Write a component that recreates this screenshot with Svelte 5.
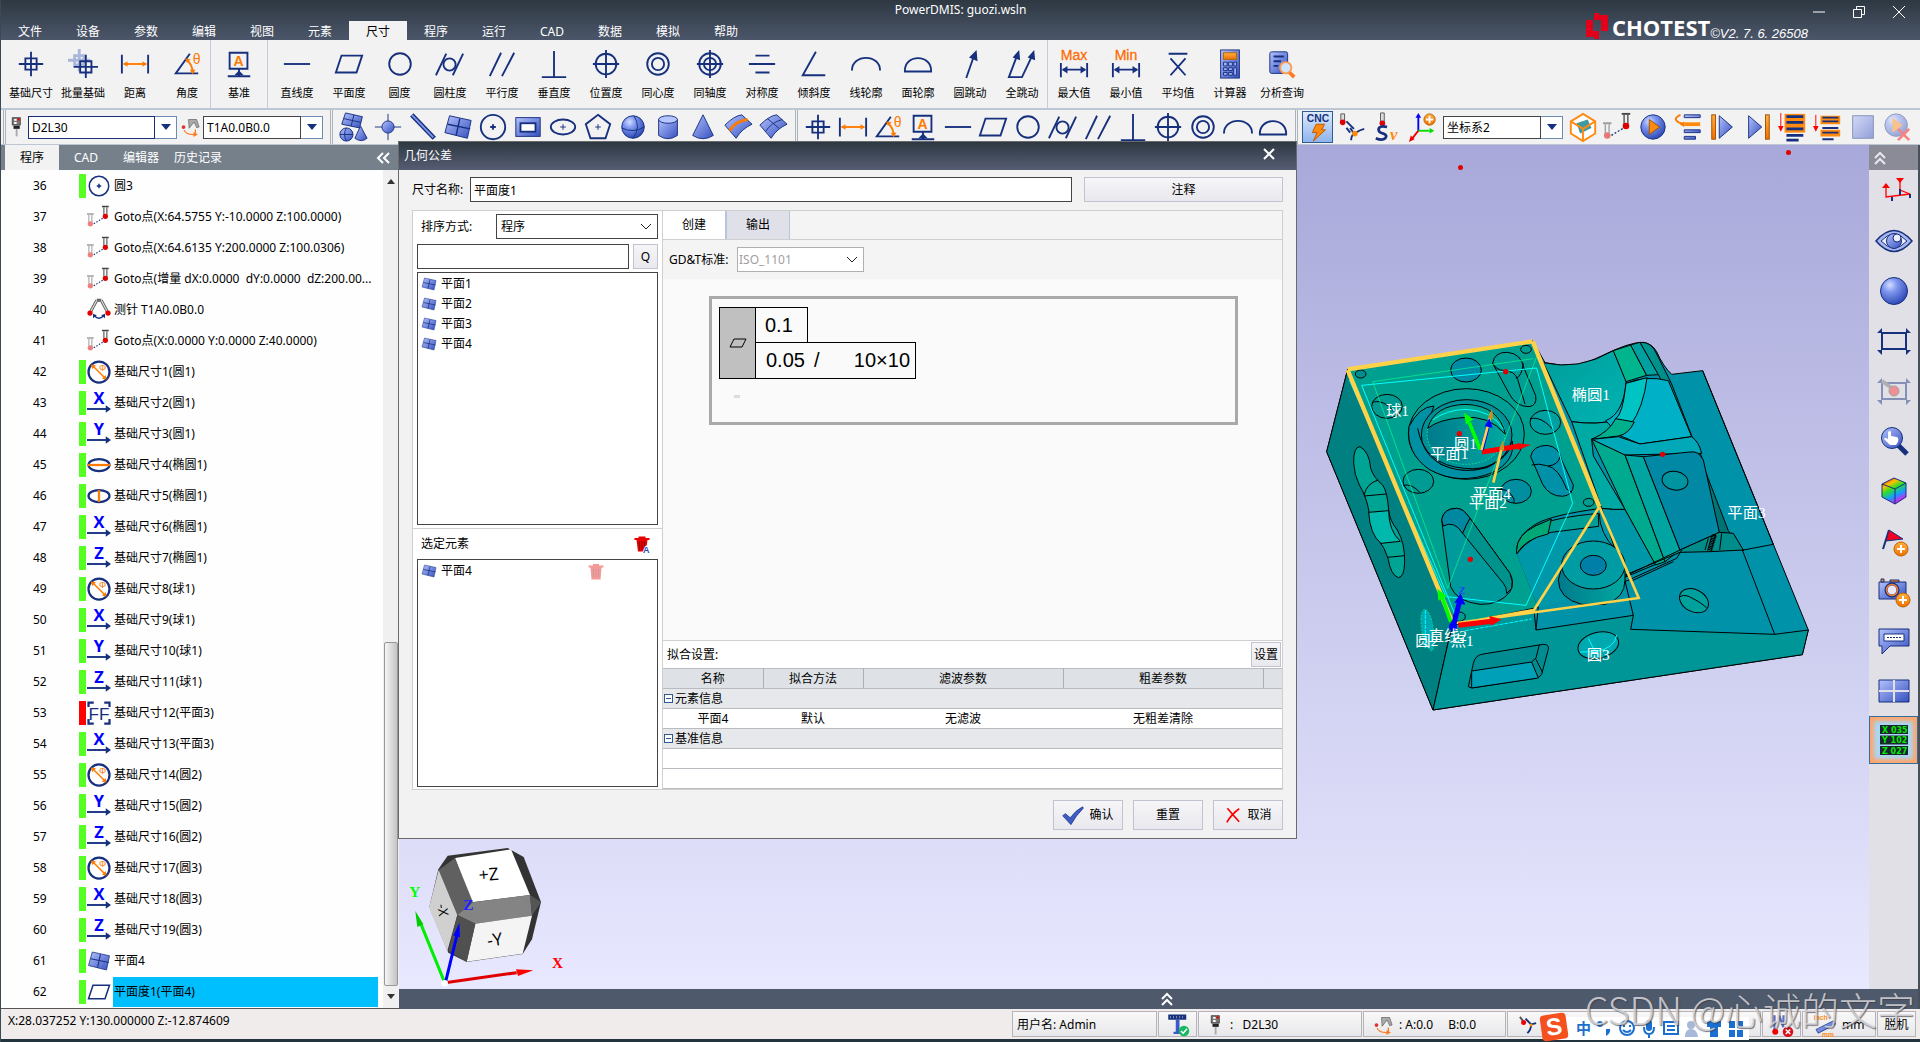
<script>
    const N = 'stroke="#16307e" stroke-width="2" fill="none"';
    const T = 'stroke="#16307e" stroke-width="1" fill="url(#blue)"';
    const O = 'stroke="#ff7a00" stroke-width="2" fill="none"';
    const plus = '<circle cx="23" cy="22" r="7" fill="url(#orange)" stroke="#c06000"/><path d="M23 18v8M19 22h8" stroke="#fff" stroke-width="2"/>';
    const probe = '<path d="M20 2h9" stroke="#444" stroke-width="2"/><path d="M22.500 3v10M26.500 3v10" stroke="#555" stroke-width="1.500"/><circle cx="24.500" cy="15" r="3.500" fill="#e00000"/>';

    // every icon is drawn in a 32 x 32 box
    const icons = {
        basic: `<path d="M16 3v26M3 16h26M10 10h12v12H10z" ${N}/>`,
        batch: `<g opacity=".35"><path d="M12 0v24M0 12h24M7 7h10v10H7z" stroke="#2448b0" stroke-width="3" fill="none"/></g><path d="M19 6v25M6 19h26M13 13h12v12H13z" ${N}/>`,
        distance: `<path d="M2 6v20M30 6v20" ${N}/><path d="M4 16h24" ${O}/><path d="M3 16l5-3v6zM29 16l-5-3v6z" fill="#ff7a00"/>`,
        angle: `<path d="M19 5L4 26h24" ${N}/><path d="M16 12q6 5 6 13" ${O}/><path d="M14 10l6 1-4 4zM19 22h6l-3 5z" fill="#ff7a00"/><text x="22" y="16" font-size="15" font-family="Liberation Sans" fill="#ff7a00">θ</text>`,
        datum: `<path d="M6 4h19v17H6zM16 21v8M4 29h24" ${N}/><path d="M11 28l5-5 5 5z" fill="#16307e"/><text x="15.500" y="18" text-anchor="middle" font-size="15" font-weight="bold" font-family="Liberation Sans" fill="#ff7a00">A</text>`,
        line: `<path d="M2 16h28" ${N}/>`,
        flat: `<path d="M8 7h22l-6 18H2z" ${N}/>`,
        circle: `<circle cx="16" cy="16" r="11.500" ${N}/>`,
        cyl: `<path d="M1 28L12 5M19 28L30 5" ${N}/><circle cx="15.500" cy="16.500" r="6.500" ${N}/>`,
        para: `<path d="M3 29L15 4M16 29L29 4" ${N}/>`,
        perp: `<path d="M16 2v28M3 30h26" ${N}/>`,
        position: `<circle cx="16" cy="16" r="11" ${N}/><path d="M16 1v30M2 16h28" ${N}/>`,
        concentric: `<circle cx="16" cy="16" r="11.500" ${N}/><circle cx="16" cy="16" r="6.500" ${N}/>`,
        coaxial: `<circle cx="16" cy="16" r="11.500" ${N}/><circle cx="16" cy="16" r="6.500" ${N}/><path d="M16 1v30M2 16h28" ${N}/>`,
        symmetry: `<path d="M9 7h15M2 16h28M9 25h15" ${N}/>`,
        slope: `<path d="M18 3L4 28h24" ${N}/>`,
        profile: `<path d="M1 23C1 5 31 5 31 23" ${N}/>`,
        surface: `<path d="M2 24C1 5 31 5 30 24z" ${N}/>`,
        runout: `<path d="M12 31L20 8" ${N}/><path d="M23 1l1 12-9-4z" fill="#16307e"/>`,
        total: `<path d="M10 9L2 30h14L26 9" ${N}/><path d="M13 1l1 11-8-3zM29 1l1 11-8-3z" fill="#16307e"/>`,
        max: `<text x="16" y="12" text-anchor="middle" font-size="15" font-family="Liberation Sans" fill="#ff6a00" stroke="#ff6a00" stroke-width=".3">Max</text><path d="M2 15v15M30 15v15M4 22h24" ${N}/><path d="M3 22l6-4v8zM29 22l-6-4v8z" fill="#16307e"/>`,
        min: `<text x="16" y="12" text-anchor="middle" font-size="15" font-family="Liberation Sans" fill="#ff6a00" stroke="#ff6a00" stroke-width=".3">Min</text><path d="M2 15v15M30 15v15M4 22h24" ${N}/><path d="M3 22l6-4v8zM29 22l-6-4v8z" fill="#16307e"/>`,
        mean: `<path d="M6 5h20M8 10l16 18M24 10L8 28" ${N}/>`,
        calc: `<rect x="6" y="1" width="20" height="30" ${T}/><rect x="9" y="4" width="14" height="7" fill="url(#orange)" stroke="#c06000"/><path d="M9 14h4v4H9zM14.500 14h4v4h-4zM20 14h3v4h-3zM9 20h4v3H9zM14.500 20h4v3h-4zM20 20h3v8h-3zM9 25h4v3H9zM14.500 25h4v3h-4z" fill="#9eb2fa" stroke="#16307e"/>`,
        query: `<rect x="3" y="3" width="19" height="23" rx="2" ${T}/><path d="M7 8h11M7 13h8M7 18h5" ${N}/><path d="M23 24l6 6" stroke="#ff7a20" stroke-width="4"/><circle cx="20" cy="20" r="6" fill="#cfe4ff" stroke="#ff9a50" stroke-width="2"/>`,

        shapes: `<path d="M8 1l18 4-3 12-19-4z" ${T}/><path d="M17 3l-3 12M6 7l18 4" stroke="#16307e"/><circle cx="9" cy="24" r="7" ${T}/><path d="M24 15l7 13q-6 5-13 0z" ${T}/><path d="M9 17q-4 7 0 14M2 24h14" stroke="#16307e" fill="none"/>`,
        point: `<path d="M16 2v28M2 16h28" stroke="#16307e"/><circle cx="16" cy="16" r="6.500" ${T}/>`,
        rod: `<path d="M4 3L28 28" stroke="#16307e" stroke-width="5"/><path d="M4 3L27 27" stroke="#7f95ec" stroke-width="2"/>`,
        plane: `<path d="M7 4l23 5-4 19-24-6z" ${T}/><path d="M18 7l-4 18M5 13l24 5" stroke="#16307e" stroke-width="1.500"/>`,
        dotcircle: `<circle cx="16" cy="16" r="13" ${N}/><path d="M16 13v6M13 16h6" stroke="#16307e" stroke-width="2"/>`,
        slot: `<rect x="3" y="6" width="26" height="20" ${T}/><rect x="8" y="12" width="16" height="9" fill="#fff" stroke="#16307e" stroke-width="2"/>`,
        ellipse: `<ellipse cx="16" cy="16" rx="13" ry="8" ${N}/><path d="M16 13v6M13 16h6" stroke="#16307e"/>`,
        penta: `<path d="M16 3l13 10-5 15H8L3 13z" ${N}/><path d="M16 13v6M13 16h6" stroke="#16307e"/>`,
        ball: `<circle cx="16" cy="16" r="12" fill="url(#ball)" stroke="#16307e"/><path d="M17 4q8 12-1 24M4 17q12 6 24-1" stroke="#16307e" fill="none"/>`,
        cylinder: `<path d="M6 8v17q10 7 20 0V8z" ${T}/><ellipse cx="16" cy="8" rx="10" ry="4" fill="#b8c6ff" stroke="#16307e"/>`,
        cone: `<path d="M16 3L5 25q11 7 22 0z" ${T}/>`,
        curve: `<path d="M2 14Q12 4 20 3l11 10Q20 18 14 28z" ${T}/><path d="M7 20Q13 10 26 8" stroke="#ff7a00" stroke-width="3" fill="none"/>`,
        mesh: `<path d="M2 14Q12 4 20 3l11 10Q20 18 14 28z" ${T}/><path d="M8 21Q14 11 26 8M10 7l12 10" stroke="#16307e" fill="none"/>`,

        cnc: `<text x="16" y="11" text-anchor="middle" font-size="11" font-weight="bold" font-family="Liberation Sans" fill="#16307e">CNC</text><path d="M14 13h9l-3 6h4L11 31l4-9h-5z" fill="#ff8a10" stroke="#c05800"/>`,
        collide: `<path d="M3 2h4v8H3z" fill="#ddd" stroke="#555"/><circle cx="5" cy="11" r="3" fill="#e00000"/><path d="M9 10l8 8M9 17l4 5M14 30q0-6 5-8 5-3 9-4M17 23l-4-6" ${N}/><circle cx="18" cy="23" r="3" fill="#ff8a10"/>`,
        speed: `<path d="M8 1h4v9H8z" fill="#ddd" stroke="#555"/><circle cx="10" cy="12" r="3" fill="#e00000"/><path d="M15 16q-9-2-9 3 0 3 5 4 5 2 2 5-3 3-10 0" stroke="#16307e" stroke-width="3" fill="none"/><text x="18" y="30" font-size="18" font-style="italic" font-weight="bold" font-family="Liberation Serif" fill="#ff8a10">ν</text>`,
        axes: `<path d="M11 20V5" stroke="#00f" stroke-width="2"/><path d="M11 1l3 5H8z" fill="#00f"/><path d="M11 20h12" stroke="#0d0" stroke-width="2"/><path d="M28 20l-5-3v6z" fill="#0d0"/><path d="M11 20L4 29" stroke="#e00" stroke-width="2"/><path d="M1 32l2-7 4 4z" fill="#e00"/><circle cx="23" cy="8" r="6" fill="url(#orange)" stroke="#c06000"/><path d="M23 4v8M19 8h8" stroke="#fff" stroke-width="2"/>`,
        box: `<path d="M16 2l13 8v13l-13 8-13-8V10z" fill="#fff" stroke="#ff8a10" stroke-width="2"/><path d="M9 12l12-4 4 9-12 6z" fill="#3e9aa0"/><path d="M3 10l13 8 13-8M16 18v13" stroke="#ff8a10" stroke-width="2" fill="none"/>`,
        goto: `${probe}<g opacity=".5"><path d="M0 12h9" stroke="#444" stroke-width="2"/><path d="M2.500 13v10M6.500 13v10" stroke="#555" stroke-width="1.500"/><circle cx="4.500" cy="25" r="3.500" fill="#e00000"/></g><path d="M9 25l13-8" stroke="#16307e" stroke-width="1.500" stroke-dasharray="2 2"/>`,
        play: `<circle cx="16" cy="16" r="13" fill="url(#ball)" stroke="#16307e"/><path d="M12 8l11 8-11 8z" fill="#ff8a10" stroke="#a05000"/>`,
        steps: `<path d="M8 3q-9 4-2 8l6 2" ${O}/><path d="M12 10v6l-5-3z" fill="#ff7a00"/><path d="M12 3h17v3H12zM12 19h17v3H12zM12 26h12v3H12z" ${T}/><rect x="12" y="11" width="17" height="4" fill="#ff8a10"/>`,
        stepout: `<rect x="4" y="3" width="4" height="26" fill="url(#orange)" stroke="#a05000"/><path d="M12 4l14 12-14 12z" ${T}/>`,
        stepend: `<rect x="24" y="3" width="4" height="26" fill="url(#orange)" stroke="#a05000"/><path d="M6 4l14 12L6 28z" ${T}/>`,
        jump: `<path d="M3 1v16" stroke="#f00"/><path d="M0 15h6l-3 6z" fill="#f00"/><path d="M7 2h22v20H7z" fill="#ff8a10"/><path d="M9 5h18M9 11h18M9 18h18M9 25h18M9 30h13" stroke="#16307e" stroke-width="3"/>`,
        jumpsel: `<path d="M3 3v14" stroke="#f00"/><path d="M0 15h6l-3 6z" fill="#f00"/><path d="M8 4h21v9H8zM8 19h21v7H8z" fill="#ff8a10"/><path d="M10 6h17M10 10h17M10 17h17M10 22h17M10 29h12" stroke="#16307e" stroke-width="2"/>`,
        stop: `<rect x="5" y="4" width="22" height="24" fill="url(#blue)" stroke="#16307e" opacity=".5"/>`,
        abort: `<g opacity=".45"><circle cx="14" cy="14" r="12" fill="url(#ball)" stroke="#16307e"/><path d="M10 6l11 8-11 8z" fill="#ff8a10"/><path d="M16 18l12 12M28 18L16 30" stroke="#f00" stroke-width="3"/></g>`,

        stylus: `<path d="M13 3L5 18M13 3h6M19 3l8 15" stroke="#666" stroke-width="4" fill="none"/><path d="M13 3L5 18M19 3l8 15" stroke="#ddd" stroke-width="1.500"/><circle cx="4" cy="20" r="3.500" fill="#e00000"/><circle cx="28" cy="20" r="3.500" fill="#e00000"/><path d="M10 24q6 6 12 0" stroke="#16307e" stroke-width="2" fill="none"/><path d="M8 27v-6l5 2zM24 27v-6l-5 2z" fill="#16307e"/>`,
        diameter: `<circle cx="16" cy="16" r="14" stroke="#16307e" stroke-width="3" fill="none"/><path d="M8 8l17 17" ${O}/><path d="M5 6l7 1-5 5zM26 26l-6-1 5-5z" fill="#ff7a00"/><text x="16" y="15" font-size="12" font-family="Liberation Sans" fill="#ff7a00">Φ</text>`,
        ellH: `<ellipse cx="16" cy="16" rx="14" ry="8" stroke="#16307e" stroke-width="3" fill="none"/><path d="M1 16h30" stroke="#ff7a00" stroke-width="3"/>`,
        ellV: `<ellipse cx="16" cy="16" rx="14" ry="8" stroke="#16307e" stroke-width="3" fill="none"/><path d="M16 8v16" stroke="#ff7a00" stroke-width="3"/>`,
        ff: `<path d="M2 8V2h7M23 2h7v6M2 24v6h7M23 30h7v-6" stroke="#16307e" stroke-width="3" fill="none"/><text x="16" y="25" text-anchor="middle" font-size="23" font-family="Liberation Sans" fill="#16307e">FF</text>`,
        head: `<path d="M10 1h13v12H10z" fill="#777" stroke="#222"/><path d="M13 3h4v3h-4zM13 8h4v3h-4z" fill="#fff"/><path d="M12 14h10v5H12z" fill="#222"/><path d="M17 19v12" stroke="#aaa" stroke-width="3"/><circle cx="20" cy="4" r="2" fill="#e00"/>`,
        wrist: `<path d="M12 4h13l4 12-4 1-4-9-8 10z" fill="#aaa" stroke="#555"/><circle cx="4" cy="16" r="3" fill="#d33"/><path d="M5 21q3 8 18 7M23 20v7" stroke="#ff7a20" stroke-width="2" fill="none"/><path d="M20 24l7 4-7 4z" fill="#ff7a20"/>`,

        touch: `<path d="M8 13v9l24-3-10-4V5" stroke="#f00" stroke-width="1.300" fill="none"/><path d="M4 13h8l-4-5zM18 3h8l-4 5z" fill="#f00"/><path d="M14 22v4M32 19v4M22 14v6" stroke="#16307e" stroke-width="2"/>`,
        eye: `<path d="M-2 16Q16-5 34 16 16 37-2 16z" fill="#a8b6ee" stroke="#16307e" stroke-width="1.500"/><path d="M3 16q13-14 26 0-13 14-26 0z" fill="#e8ecff" stroke="#16307e"/><circle cx="16" cy="16" r="7.500" fill="url(#blue)" stroke="#16307e"/><circle cx="19" cy="13" r="4" fill="#eef" stroke="#16307e"/>`,
        sphere: `<circle cx="16" cy="16" r="13.500" fill="url(#ball)" stroke="#16307e"/>`,
        fit: `<rect x="4" y="8" width="24" height="16" ${N}/><path d="M-1 8h5V3zM33 8h-5V3zM-1 25h5v5zM33 25h-5v5z" fill="#16307e"/>`,
        fitprobe: `<g opacity=".45"><rect x="4" y="8" width="24" height="16" ${N}/><path d="M-1 8h5V3zM33 8h-5V3zM-1 25h5v5zM33 25h-5v5z" fill="#16307e"/><path d="M4 6l11 8" stroke="#777" stroke-width="4"/><circle cx="16" cy="16" r="5" fill="#f33" stroke="#555"/></g>`,
        hand: `<path d="M20 20l9 9" stroke="#16307e" stroke-width="5"/><circle cx="14" cy="13" r="10.500" ${T}/><path d="M10 7q2-2 3 0v4l6 1q2 1 1 5l-2 3h-6l-6-6q1-2 4 0z" fill="#fff"/>`,
        rainbow: `<path d="M16 3l12 5v14l-11 7-13-7V9z" fill="url(#rain)" stroke="#16307e"/><path d="M4 9l13 5 11-6M17 14v15" stroke="#16307e" fill="none"/>`,
        flag: `<path d="M11 5L5 24" ${N}/><path d="M11 5l14 9-17 2z" fill="#f00020" stroke="#16307e"/><g transform="translate(0 2)">${plus}</g>`,
        camera: `<path d="M1 7h27v17H1z" ${T}/><path d="M3 4h3v3H3zM12 5h9v2h-9z" fill="#ff8a10" stroke="#16307e"/><circle cx="14" cy="15" r="6" fill="#e8e8ff" stroke="#16307e" stroke-width="3"/><circle cx="14" cy="15" r="5.500" fill="none" stroke="#f08030" stroke-width="1.500"/><g transform="translate(2 3)">${plus}</g>`,
        chat: `<path d="M1 4h30v17H12l-8 8v-8H1z" ${T}/><path d="M6 9h20v7H6z" fill="#fff" stroke="#16307e"/><path d="M9 12.500h14" stroke="#16307e" stroke-dasharray="2 1"/>`,
        quad: `<path d="M1 5h30v22H1z" ${T}/><path d="M1 16h30M16 5v22" stroke="#e0e0e6" stroke-width="2"/>`,
        dro: `<path d="M2 1h28v9H2zM2 11.500h28v9H2zM2 22h28v9H2z" fill="#1c2630"/><g font-size="8" font-weight="bold" font-family="DejaVu Sans" fill="#0e0"><text x="4" y="8.500">X 035</text><text x="4" y="19">Y 102</text><text x="4" y="29.500">Z 027</text></g>`,

        table: `<path d="M3 2h24v7H3z" fill="#16307e"/><path d="M6 4v3M10 4v3M14 4v3M18 4v3M22 4v3" stroke="#9ab"/><path d="M13 9h5v16h-5zM10 25h9v3h-9z" fill="#3a5ac8"/><circle cx="24" cy="24" r="7" fill="#16b860"/><path d="M20 24l3 3 5-6" stroke="#fff" stroke-width="2" fill="none"/>`,
        pen: `<path d="M3 3l6 8" stroke="#555" stroke-width="3"/><circle cx="9" cy="12" r="4" fill="#e00"/><path d="M12 6l9 9M21 15l8-2M21 15q0 8-6 14" stroke="#16307e" stroke-width="3" fill="none"/><circle cx="21" cy="16" r="2.500" fill="#ff8a10"/>`,
        probes: `<path d="M6 3v20M12 3l6 16M18 3v12" stroke="#5a70c0" stroke-width="3"/><circle cx="7" cy="25" r="4" fill="#e00"/><circle cx="24" cy="25" r="7" fill="#d8101c"/><path d="M21 22l6 6M27 22l-6 6" stroke="#fff" stroke-width="2"/>`,
        unit: `<text x="1" y="9" font-size="9" font-weight="bold" font-family="Liberation Sans" fill="#ff8a10">inch</text><path d="M4 22L28 10l2 5L7 27z" ${T}/><text x="12" y="32" font-size="9" font-weight="bold" font-family="Liberation Sans" fill="#ff8a10">mm</text>`,

        bin: `<path d="M1 5h30v4H1zM10 2h12v4H10zM5 9h22l-2 24H7z" fill="#e60000"/><path d="M11 12v16M16 12v16M21 12v16" stroke="#800000" stroke-width="2"/>`,
        binall: `<path d="M1 4h30v4H1zM9 1h14v4H9zM5 8h22l-3 23H8z" fill="#e60000"/><path d="M11 11v16M16 11v16M21 11v16" stroke="#800000" stroke-width="2"/><text x="18" y="33" font-size="18" font-weight="bold" font-family="Liberation Sans" fill="#2a50b8" stroke="#fff" stroke-width="3" paint-order="stroke">A</text>`,
        check: `<path d="M1 17l4-3 7 6Q20 9 30 4l1 2Q20 17 13 30z" fill="#3e5cc4" stroke="#16307e"/>`,
        cross: `<path d="M6 4q10 12 21 24M27 5Q14 14 5 29" stroke="#f00" stroke-width="3" fill="none"/>`
    };
    for (const a of ['X', 'Y', 'Z']) {
        icons['axis' + a] = `<text x="16" y="17" text-anchor="middle" font-size="22" font-weight="bold" font-family="Open Sans" fill="#0000ff">${a}</text><path d="M0 24h28" stroke="#16307e" stroke-width="2.500"/><path d="M25 19l7 5-7 5z" fill="#16307e"/>`;
    }

    const menus = ['文件', '设备', '参数', '编辑', '视图', '元素', '尺寸', '程序', '运行', 'CAD', '数据', '模拟', '帮助'];

    const ribbon = [
        [['basic', '基础尺寸'], ['batch', '批量基础'], ['distance', '距离'], ['angle', '角度']],
        [['datum', '基准']],
        [['line', '直线度'], ['flat', '平面度'], ['circle', '圆度'], ['cyl', '圆柱度'], ['para', '平行度'], ['perp', '垂直度'],
            ['position', '位置度'], ['concentric', '同心度'], ['coaxial', '同轴度'], ['symmetry', '对称度'], ['slope', '倾斜度'],
            ['profile', '线轮廓'], ['surface', '面轮廓'], ['runout', '圆跳动'], ['total', '全跳动']],
        [['max', '最大值'], ['min', '最小值'], ['mean', '平均值'], ['calc', '计算器'], ['query', '分析查询']]
    ];

    const elementTools = ['shapes', 'point', 'rod', 'plane', 'dotcircle', 'slot', 'ellipse', 'penta', 'ball', 'cylinder', 'cone', 'curve', 'mesh'];
    const sizeTools = ['basic', 'distance', 'angle', 'datum', 'line', 'flat', 'circle', 'cyl', 'para', 'perp', 'position', 'concentric', 'profile', 'surface'];
    const moveTools = ['cnc', 'collide', 'speed', 'axes'];
    const runTools = ['box', 'goto', 'play', 'steps', 'stepout', 'stepend', 'jump', 'jumpsel', 'stop', 'abort'];
    const sideTools = ['touch', 'eye', 'sphere', 'fit', 'fitprobe', 'hand', 'rainbow', 'flag', 'camera', 'chat', 'quad', 'dro'];

    // [line, mark, icon, text]
    const program = [
        [36, 'ok', 'dotcircle', '圆3'],
        [37, '', 'goto', 'Goto点(X:64.5755 Y:-10.0000 Z:100.0000)'],
        [38, '', 'goto', 'Goto点(X:64.6135 Y:200.0000 Z:100.0306)'],
        [39, '', 'goto', 'Goto点(增量 dX:0.0000  dY:0.0000  dZ:200.00...'],
        [40, '', 'stylus', '测针 T1A0.0B0.0'],
        [41, '', 'goto', 'Goto点(X:0.0000 Y:0.0000 Z:40.0000)'],
        [42, 'ok', 'diameter', '基础尺寸1(圆1)'],
        [43, 'ok', 'axisX', '基础尺寸2(圆1)'],
        [44, 'ok', 'axisY', '基础尺寸3(圆1)'],
        [45, 'ok', 'ellH', '基础尺寸4(椭圆1)'],
        [46, 'ok', 'ellV', '基础尺寸5(椭圆1)'],
        [47, 'ok', 'axisX', '基础尺寸6(椭圆1)'],
        [48, 'ok', 'axisZ', '基础尺寸7(椭圆1)'],
        [49, 'ok', 'diameter', '基础尺寸8(球1)'],
        [50, 'ok', 'axisX', '基础尺寸9(球1)'],
        [51, 'ok', 'axisY', '基础尺寸10(球1)'],
        [52, 'ok', 'axisZ', '基础尺寸11(球1)'],
        [53, 'bad', 'ff', '基础尺寸12(平面3)'],
        [54, 'ok', 'axisX', '基础尺寸13(平面3)'],
        [55, 'ok', 'diameter', '基础尺寸14(圆2)'],
        [56, 'ok', 'axisY', '基础尺寸15(圆2)'],
        [57, 'ok', 'axisZ', '基础尺寸16(圆2)'],
        [58, 'ok', 'diameter', '基础尺寸17(圆3)'],
        [59, 'ok', 'axisX', '基础尺寸18(圆3)'],
        [60, 'ok', 'axisZ', '基础尺寸19(圆3)'],
        [61, 'ok', 'plane', '平面4'],
        [62, 'ok', 'flat', '平面度1(平面4)']
    ];

    const planes = ['平面1', '平面2', '平面3', '平面4'];

    let sizeName = $state('平面度1');
    let keyword = $state('');
    let selected = $state(62);
</script>

{#snippet icon(name, size)}
    <svg class="icon" width={size} height={size} viewBox="0 0 32 32" aria-hidden="true">{@html icons[name]}</svg>
{/snippet}

{#snippet tools(list)}
    {#each list as name}
        <button class="tool" class:pressed={name === 'cnc'} aria-label={name}>{@render icon(name, 30)}</button>
    {/each}
{/snippet}

<svg class="defs" width="0" height="0" aria-hidden="true">
    <defs>
        <linearGradient id="blue" x1="0" y1="0" x2="1" y2="1">
            <stop offset="0" stop-color="#b4c2fc" />
            <stop offset="1" stop-color="#3550c0" />
        </linearGradient>
        <linearGradient id="orange" x1="0" y1="0" x2="0" y2="1">
            <stop offset="0" stop-color="#ffb040" />
            <stop offset="1" stop-color="#f07000" />
        </linearGradient>
        <radialGradient id="ball" cx=".35" cy=".28" r=".75">
            <stop offset="0" stop-color="#d4deff" />
            <stop offset=".35" stop-color="#8098f0" />
            <stop offset="1" stop-color="#2c48b4" />
        </radialGradient>
        <linearGradient id="rain" x1="0" y1="0" x2=".5" y2="1">
            <stop offset=".1" stop-color="#f03010" />
            <stop offset=".3" stop-color="#ffc000" />
            <stop offset=".5" stop-color="#30e020" />
            <stop offset=".75" stop-color="#10a0ff" />
            <stop offset="1" stop-color="#e020f0" />
        </linearGradient>
    </defs>
</svg>

<div class="app">
    <header class="titlebar">
        <div class="caption">PowerDMIS: guozi.wsln</div>
        <nav class="menu">
            {#each menus as item}
                <button class:active={item === '尺寸'}>{item}</button>
            {/each}
        </nav>
        <div class="brand">
            <svg width="22" height="26" viewBox="0 0 22 26" aria-hidden="true">
                <path d="M8 0h5v2h9v16h-7V7H8zM0 7h7v11h6v8H8v-2H0z" fill="#e3001b" />
            </svg>
            <strong>CHOTEST</strong>
            <em>©V2. 7. 6. 26508</em>
        </div>
        <div class="winctl">
            <button aria-label="最小化"><svg width="14" height="14"><path d="M1 7h12" stroke="#fff" /></svg></button>
            <button aria-label="还原"><svg width="14" height="14"><path d="M1.500 4.500h8v8h-8zM4.500 4V1.500h8v8H10" fill="none" stroke="#fff" /></svg></button>
            <button aria-label="关闭"><svg width="14" height="14"><path d="M1 1l12 12M13 1L1 13" stroke="#fff" /></svg></button>
        </div>
    </header>

    <div class="ribbon">
        {#each ribbon as group}
            <div class="group">
                {#each group as [name, label]}
                    <button class="big" class:narrow={name === 'circle'}>{@render icon(name, 30)}<span>{label}</span></button>
                {/each}
            </div>
        {/each}
    </div>

    <div class="toolbar">
        <div class="strip first">
            {@render icon('head', 20)}
            <div class="combo navy wide">
                <select aria-label="测头"><option>D2L30</option></select><i></i>
            </div>
            {@render icon('wrist', 20)}
            <div class="combo">
                <select aria-label="测针"><option>T1A0.0B0.0</option></select><i></i>
            </div>
        </div>
        <div class="strip elements">{@render tools(elementTools)}</div>
        <div class="strip sizes">{@render tools(sizeTools)}</div>
        <div class="strip run">
            {@render tools(moveTools)}
            <div class="combo">
                <select aria-label="坐标系"><option>坐标系2</option></select><i></i>
            </div>
            {@render tools(runTools)}
        </div>
    </div>

    <main>
        <aside class="program">
            <div class="tabs">
                <button class="active">程序</button>
                <button>CAD</button>
                <button>编辑器</button>
                <button>历史记录</button>
                <button class="fold" aria-label="折叠">
                    <svg width="14" height="12"><path d="M7 1L2 6l5 5M13 1L8 6l5 5" fill="none" stroke="#fff" stroke-width="2" /></svg>
                </button>
            </div>
            <div class="listing">
                <ul>
                    {#each program as [no, mark, name, text]}
                        <li>
                            <span class="no">{no}</span>
                            <span class="mark {mark}"></span>
                            {@render icon(name, 24)}
                            <button class:selected={selected === no} onclick={() => (selected = no)}>{text}</button>
                        </li>
                    {/each}
                </ul>
                <div class="scroll">
                    <svg width="8" height="5"><path d="M0 5l4-5 4 5z" fill="#333" /></svg>
                    <div class="thumb"></div>
                    <svg width="8" height="5"><path d="M0 0h8L4 5z" fill="#333" /></svg>
                </div>
            </div>
        </aside>

        <section class="work">
            <div class="scene">
                <div class="viewport">
                    <svg class="part" width="520" height="400" viewBox="0 0 1560 1200" role="img" aria-label="CAD">
                        <defs>
                            <linearGradient id="bore" x1="0" y1="0" x2="1" y2="0">
                                <stop offset="0" stop-color="#007a8c" />
                                <stop offset="1" stop-color="#00a8a0" />
                            </linearGradient>
                            <linearGradient id="saddle" x1="0" y1="0" x2="1" y2="1">
                                <stop offset="0" stop-color="#009c98" />
                                <stop offset="1" stop-color="#00b4b4" />
                            </linearGradient>
                            <linearGradient id="cliff" x1="0" y1="0" x2="1" y2="0">
                                <stop offset="0" stop-color="#009a94" />
                                <stop offset="1" stop-color="#00686c" />
                            </linearGradient>
                        </defs>
                        <g stroke="#000" stroke-width="3" stroke-linejoin="round" fill="none">
                            <path d="M113 148L668 62l37 66q95 22 165-18 90-45 130-43 25 3 40 28 20 45 45 68l93-11 212 521 105 257-18 74-1108 166L50 395z" fill="#0092a8" />
                            <path d="M113 148L50 395l319 775 46-205 15-50z" fill="#008080" />
                            <path d="M430 915l242-45 6 60 292-44-8 42 432 15 101-13-18 74-1108 166 46-205z" fill="#009698" />
                            <path d="M700 128q105 25 210-36l38 90q-2 110-30 118-55 16-133 5z" fill="url(#saddle)" />
                            <path d="M785 305q78 11 133-5-20 40-73 58l5 50 95 160q-35 2-70-3z" fill="#00aaa4" />
                            <path d="M875 565q35 5 70 3l92 165-95 40z" fill="#0098a8" />
                            <path d="M910 92l52-17 48 91-62 19z" fill="#00b48e" />
                            <path d="M962 75l28-8 56 97-36 2z" fill="#00a0a0" />
                            <path d="M990 67q35-2 50 35l45 90 170 440 45 60-30-50-45-5-50-227-130-246z" fill="url(#cliff)" />
                            <path d="M948 190q60-25 127-8l70 168-155 22-60-25-43-45q52-20 61-112z" fill="#00b0c6" />
                            <path d="M948 190q-10 95-31 106l44 20q40-55 50-143z" fill="#00c4c4" />
                            <path d="M917 296q-20 40-72 62l80-10q30-5 48-42z" fill="#00b08c" />
                            <path d="M845 358l80-8 65 22 155-22q22 16 30 50l-232 5z" fill="#00a8b8" />
                            <path d="M845 358l100 47 120 320-28 10-92-167z" fill="#00aa8e" />
                            <path d="M945 405l55 5 110 280-45 35z" fill="#00a4a0" />
                            <path d="M1000 410l140-14q25-5 40 24l48 217-118 53z" fill="#0088a4" />
                            <path d="M942 770l168-80 118-53 42 3 30 50-100 5-90 2-145 60-120 46z" fill="#008c88" />
                            <path d="M945 785l155-70 15-25M960 785l130-60M1195 655l-10 35M1205 648l-12 44M1217 642l-14 50M1235 640l-6 50" />
                            <path d="M1178 152l212 521-95 18M1297 690l97 253" />
                            <ellipse cx="1095" cy="482" rx="39" ry="28" transform="rotate(10 1095 482)" fill="#0094a0" />
                            <ellipse cx="1152" cy="842" rx="46" ry="33" transform="rotate(28 1152 842)" fill="#00a09c" />
                            <path d="M1108 832q10-10 30-2 40 20 52 34" />
                            <path d="M1214 645l-14 46" stroke-width="14" stroke-dasharray="3 2" />

                            <path d="M113 148L668 62l205 503q-150 20-195 47-70 42-54 95l61 155-255 53z" fill="#00a090" />
                            <path d="M873 572q-150 18-195 45-75 45-54 95l61 155 257-92z" fill="#0098a8" stroke="none" />
                            <path d="M865 580q-130 12-187 37-70 42-54 80 40-50 100-60l142-18z" fill="#009e94" />
                            <path d="M620 690q0-45 58-73l46-20-10 45q-70 15-94 60z" fill="#00a878" />
                            <path d="M868 580q0 60 50 110" fill="none" />
                            <path d="M970 886l-28-115M685 860l-7 70" />
                            <path d="M757 735l-12 45q0 55 70 73h70q60-18 60-73V735z" fill="url(#bore)" />
                            <ellipse cx="850" cy="735" rx="95" ry="72" fill="#009ca4" />
                            <ellipse cx="850" cy="736" rx="39" ry="30" fill="#0080a8" />

                            <ellipse cx="468" cy="150" rx="46" ry="36" fill="#008ca4" />
                            <ellipse cx="231" cy="259" rx="46" ry="36" fill="#009a90" />
                            <ellipse cx="706" cy="307" rx="46" ry="36" fill="#00a0a0" />
                            <ellipse cx="325" cy="484" rx="46" ry="36" fill="#009c94" />
                            <ellipse cx="618" cy="514" rx="46" ry="36" fill="#008ea0" />
                            <ellipse cx="152" cy="162" rx="16" ry="12" fill="#008c90" />
                            <ellipse cx="648" cy="88" rx="16" ry="12" fill="#009c90" />
                            <ellipse cx="836" cy="547" rx="16" ry="12" fill="#009c90" />
                            <ellipse cx="448" cy="890" rx="18" ry="14" fill="#009c90" />
                            <path d="M188 247q20-8 46 10 28 24 25 34M660 297q20-8 46 10 26 20 26 32M280 496q26-6 50 22M560 510q30-6 44 14 12 14 8 24" />
                            <path d="M548 130q5-35 45-33 40 4 48 45l36 85q5 30-20 33-40 0-60-40z" fill="#009e94" />
                            <path d="M548 130q10 20 35 22 30 0 40 26l22 74M640 130q-5 40-22 45" />
                            <path d="M662 410q5-33 50-34 35 4 43 44l35 75q0 30-32 34-40 0-60-36z" fill="#0090a8" />
                            <path d="M665 435q20-6 45 2 35 5 60 70l15 10M750 410q-5 25-36 28" />

                            <ellipse cx="469" cy="342" rx="174" ry="136" fill="#009e94" />
                            <path d="M297 320q30-60 75-62l-30 80q-5 60 50 95 70 30 140 10 60-30 75-80 10 60-60 95-100 40-190-10-70-50-60-128z" fill="#0090a4" />
                            <ellipse cx="470" cy="345" rx="136" ry="106" fill="#009098" />
                            <path d="M323 325q20 110 140 120 100 10 145-70" />
                            <ellipse cx="468" cy="343" rx="117" ry="90" fill="url(#bore)" stroke="#00f090" stroke-dasharray="5 5" />
                            <path d="M353 325q20-70 115-72 100 4 118 90-50-60-130-50-70 5-103 32z" fill="#00a894" />
                            <path d="M368 300q40-30 100-32 80 4 112 60" stroke="#00ffff" />

                            <path d="M395 600q5-35 45-35 20 0 40 30L600 760q15 30 0 55-30 40-90 38-70-8-88-53z" fill="#009a9c" />
                            <path d="M395 600q5-35 45-35 20 0 40 30l-22 45q-25-40-58-22z" fill="#0088a0" />
                            <path d="M458 640q10-25 22-45L600 760q10 25 5 45l-15 15q0-20-10-30z" fill="#00928c" />
                            <path d="M131 430Q130 380 150 380 178 395 182 445 192 475 218 495 232 515 236 570 238 600 262 630 285 670 284 725 283 772 265 773 242 765 234 715 226 685 202 655 180 625 178 580 170 530 148 495 133 465 131 430z" fill="#00a494" />
                            <path d="M176 577l60-5q0 60 35 92l-58 6q-33-26-37-93z" fill="#00b8ac" />
                            <path d="M162 528l68-6M233 712l50-5M205 480q-35 10-43 45" />
                            <path d="M333 900q0-30 12-32 18 8 25 60 5 60-5 65-30-20-32-93z" fill="#00a8b4" stroke="#00e890" stroke-dasharray="5 5" />
                            <path d="M475 1100l15-70q5-25 30-28l180-29q18 0 15 15l-20 75q-5 10-20 12l-190 29z" fill="#008c90" />
                            <path d="M485 1053l180-27 20 48-200 30z" fill="#00a0b8" />
                            <path d="M665 1026l13-12 10-40M678 1018l20 40" />
                            <ellipse cx="865" cy="976" rx="62" ry="39" transform="rotate(-14 865 976)" fill="#00a8b0" />
                            <path d="M835 955l20 40q60-10 65-50M810 996l45-1" stroke="#00ffff" />
                        </g>
                        <g fill="none" stroke="#00ffff" stroke-width="3">
                            <path d="M118 180l290 650 240 26 140-306-108-406-525 52 285 700" />
                            <path d="M670 116L188 185l225 620L680 110" stroke="#00ff90" stroke-width="2" />
                            <path d="M465 932l200-35M346 870v115" stroke-dasharray="12 3" />
                        </g>
                        <g fill="none" stroke="#ffd24a">
                            <path d="M113 148L668 64M113 150l312 752M668 64l200 496" stroke-width="13" />
                            <path d="M868 560l118 274-546 75M868 560L672 870l-220 40" stroke-width="8" />
                        </g>
                        <g fill="none" stroke-width="11">
                            <path d="M516 396l114-18M445 916l100-12" stroke="#f00" stroke-width="15" />
                            <path d="M510 388l-32-80M422 905l-26-75" stroke="#0f0" />
                            <path d="M430 918l18-70" stroke="#00f" stroke-width="15" />
                            <path d="M516 390l20-80" stroke="#00f" />
                            <path d="M514 390l30-112M550 488l27-112" stroke="#ffd24a" stroke-width="8" />
                        </g>
                        <path d="M538 295l-14 24 24 4z" fill="#00f" />
                        <path d="M546 266l-12 28 16 4zM579 360l-12 28 16 4z" fill="#c89020" />
                        <path d="M663 374l-38 16-3-20zM575 898l-32 20-5-30z" fill="#f00" />
                        <path d="M462 278l28 20-22 16zM382 806l28 22-25 14z" fill="#0f0" />
                        <path d="M452 820l14 34-33-6z" fill="#00f" />
                        <circle cx="429" cy="920" r="12" fill="#00f" />
                        <g fill="#e00000">
                            <circle cx="587" cy="155" r="8" /><circle cx="448" cy="341" r="8" />
                            <circle cx="481" cy="718" r="8" /><circle cx="1058" cy="403" r="8" />
                        </g>
                        <g class="tags">
                            <text x="228" y="288">球1</text>
                            <text x="785" y="240">椭圆1</text>
                            <text x="432" y="388">圆1</text>
                            <text x="360" y="417">平面1</text>
                            <text x="488" y="537">平面4</text>
                            <text x="476" y="565">平面2</text>
                            <text x="1252" y="595">平面3</text>
                            <text x="316" y="978">圆2</text>
                            <text x="356" y="963">直线2</text>
                            <text x="422" y="978">点1</text>
                            <text x="830" y="1021">圆3</text>
                            <text x="446" y="822" class="z">Z</text>
                        </g>
                    </svg>
                    <svg class="cube" width="170" height="150" viewBox="0 930 510 450" role="img" aria-label="视图立方体">
                        <path d="M143 977l180-23 48 27 52 135-27 112-28 44-168 24-55-28-57-137 27-113z" fill="#333" />
                        <path d="M165 984l168-26 57 137-175 22z" fill="#fff" />
                        <path d="M116 1020l49-36 54 133-47 38z" fill="#606060" />
                        <path d="M116 1020l56 135-30 108-55-130z" fill="#d0d0d0" />
                        <path d="M219 1117l171-22 6 62-170 24-54-26z" fill="#848484" />
                        <path d="M226 1181l170-24-28 114-168 24z" fill="#f4f4f4" />
                        <path d="M172 1155l54 26-26 114-55-32z" fill="#505050" />
                        <path d="M390 1095l33 21-27 41z" fill="#555" />
                        <g class="face">
                            <text x="238" y="1054" transform="rotate(-5 238 1054)">+Z</text>
                            <text x="264" y="1250" transform="rotate(-8 264 1250)">-Y</text>
                            <text x="112" y="1124" transform="rotate(82 112 1124)" class="small">-X</text>
                        </g>
                        <path d="M135 1358l215-30" stroke="#e00000" stroke-width="9" />
                        <path d="M400 1321l-52-3 6 20z" fill="#f00" />
                        <path d="M133 1355L62 1180" stroke="#0e0" stroke-width="9" />
                        <path d="M46 1143l24 40-18 8z" fill="#0c0" />
                        <path d="M137 1355l34-140" stroke="#00f" stroke-width="9" />
                        <path d="M178 1178l2 44-20-5z" fill="#00f" />
                        <circle cx="134" cy="1360" r="10" fill="#fff" />
                        <g class="axis">
                            <text x="28" y="1101" fill="#0f0">Y</text>
                            <text x="190" y="1140" fill="#22f">Z</text>
                            <text x="456" y="1313" fill="#f00">X</text>
                        </g>
                    </svg>
                    <span class="dot one"></span>
                    <span class="dot two"></span>
                </div>
                <nav class="side">
                    <button class="up" aria-label="收起">
                        <svg width="14" height="14"><path d="M2 7l5-5 5 5M2 13l5-5 5 5" fill="none" stroke="#e8e8f0" stroke-width="2" /></svg>
                    </button>
                    <div class="stack">
                        {#each sideTools as name}
                            <button class:lit={name === 'dro'} aria-label={name}>{@render icon(name, 32)}</button>
                        {/each}
                    </div>
                </nav>
            </div>
            <div class="drawer">
                <svg width="12" height="14"><path d="M1 7l5-5 5 5M1 13l5-5 5 5" fill="none" stroke="#fff" stroke-width="2" /></svg>
            </div>
        </section>
    </main>

    <footer class="status">
        <span class="coords">X:28.037252 Y:130.000000 Z:-12.874609</span>
        <span class="cell user">用户名: Admin</span>
        <span class="cell slim">{@render icon('table', 24)}</span>
        <span class="cell mid">{@render icon('head', 20)}:&nbsp;&nbsp; D2L30</span>
        <span class="cell ang">{@render icon('wrist', 20)}: A:0.0<span class="b">B:0.0</span></span>
        <span class="cell tip">{@render icon('pen', 20)}:</span>
        <span class="cell slim">{@render icon('probes', 24)}</span>
        <span class="cell mm">{@render icon('unit', 24)}mm</span>
        <span class="cell slim">脱机</span>
    </footer>
    <div class="taskbar"></div>

    <div class="ime">
        <svg width="206" height="24" viewBox="0 0 206 24" aria-hidden="true">
            <g fill="none" stroke="#1a6fd0" stroke-width="2">
                <circle cx="84" cy="11" r="7" /><path d="M80 13q4 4 8 0" /><path d="M81 8v2M87 8v2" />
                <path d="M101 10q0 7 5 7t5-7M106 17v4" /><rect x="121" y="5" width="14" height="12" /><path d="M124 9h8M124 13h8" />
                <circle cx="57" cy="7" r="2" />
            </g>
            <rect x="103" y="3" width="6" height="11" rx="3" fill="#1a6fd0" />
            <path d="M63 12h4q1 4-4 7z" fill="#1a6fd0" />
            <path d="M148 4a4 4 0 1 1 0 8 4 4 0 1 1 0-8zM142 20q0-8 6-8t7 8z" fill="#a8b8d8" />
            <path d="M164 4h4q3 3 6 0h4v6h-3v10h-8V10h-3z" fill="#1a6fd0" />
            <path d="M186 4h6v7h-6zM194 4h6v7h-6zM186 13h6v7h-6zM194 13h6v7h-6z" fill="#1a6fd0" />
        </svg>
        <b>中</b>
        <span class="sogou">S</span>
    </div>
    <div class="watermark">CSDN @心诚的文字</div>

    <div class="dialog" role="dialog" aria-label="几何公差">
        <div class="dlg-title">
            <span>几何公差</span>
            <button aria-label="关闭"><svg width="12" height="12"><path d="M1 1l10 10M11 1L1 11" stroke="#fff" stroke-width="2" /></svg></button>
        </div>
        <div class="dlg-name">
            <label for="size-name">尺寸名称:</label>
            <input id="size-name" bind:value={sizeName} />
            <button class="btn">注释</button>
        </div>
        <div class="dlg-body">
            <div class="pick">
                <div class="row sort">
                    <label for="sort">排序方式:</label>
                    <div class="drop">
                        <select id="sort"><option>程序</option></select>
                        <svg width="12" height="7"><path d="M1 1l5 5 5-5" fill="none" stroke="#222" stroke-width="1" /></svg>
                    </div>
                </div>
                <div class="row search">
                    <input aria-label="搜索" bind:value={keyword} />
                    <button class="btn">Q</button>
                </div>
                <ul class="box tall">
                    {#each planes as name}
                        <li>{@render icon('plane', 16)}{name}</li>
                    {/each}
                </ul>
                <div class="row chosen">
                    <span>选定元素</span>
                    <button class="flat" aria-label="全部删除">{@render icon('binall', 16)}</button>
                </div>
                <ul class="box short">
                    <li>{@render icon('plane', 16)}平面4<button class="flat faded" aria-label="删除">{@render icon('bin', 16)}</button></li>
                </ul>
            </div>
            <div class="define">
                <div class="dlg-tabs">
                    <button class="on">创建</button>
                    <button>输出</button>
                </div>
                <div class="standard">
                    <label for="std">GD&amp;T标准:</label>
                    <div class="drop grey">
                        <select id="std"><option>ISO_1101</option></select>
                        <svg width="12" height="7"><path d="M1 1l5 5 5-5" fill="none" stroke="#222" stroke-width="1" /></svg>
                    </div>
                </div>
                <div class="sheet">
                    <div class="frame">
                        <div class="fcf">
                            <div class="sym">
                                <svg width="18" height="10"><path d="M5 1h12l-4 8H1z" fill="none" stroke="#000" /></svg>
                            </div>
                            <div class="vals">
                                <div class="v1">0.1</div>
                                <div class="v2"><span>0.05</span><span>/</span><span class="area">10×10</span></div>
                            </div>
                        </div>
                        <div class="dash"></div>
                    </div>
                </div>
                <div class="fit">
                    <span>拟合设置:</span>
                    <button class="btn">设置</button>
                </div>
                <table>
                    <colgroup><col class="c1" /><col class="c1" /><col class="c2" /><col class="c2" /><col /></colgroup>
                    <thead>
                        <tr><th>名称</th><th>拟合方法</th><th>滤波参数</th><th>粗差参数</th><th></th></tr>
                    </thead>
                    <tbody>
                        <tr class="sect"><td colspan="5"><span class="fold-box"></span>元素信息</td></tr>
                        <tr><td>平面4</td><td>默认</td><td>无滤波</td><td>无粗差清除</td><td></td></tr>
                        <tr class="sect"><td colspan="5"><span class="fold-box"></span>基准信息</td></tr>
                        <tr><td colspan="5"></td></tr>
                        <tr><td colspan="5"></td></tr>
                    </tbody>
                </table>
            </div>
        </div>
        <div class="dlg-foot">
            <button class="btn">{@render icon('check', 22)}确认</button>
            <button class="btn">重置</button>
            <button class="btn">{@render icon('cross', 18)}取消</button>
        </div>
    </div>
</div>

<style>
    :global(body) {
        margin: 0;
        overflow: hidden;
    }

    .app, .app button, .app input, .app select {
        font-family: "Noto Sans", "Noto Sans CJK SC", sans-serif;
        font-size: 12px;
        color: #000;
    }

    .app {
        position: relative;
        display: flex;
        flex-direction: column;
        height: 100vh;
        box-sizing: border-box;
        border-left: 1px solid #3c4852;
        background: #f2f2f2;
        line-height: 16px;
    }

    .app *, .app *::before {
        box-sizing: border-box;
    }

    .app button {
        padding: 0;
        border: 0;
        background: none;
        line-height: 16px;
        white-space: nowrap;
    }

    .defs {
        position: absolute;
    }

    .icon {
        flex: none;
        display: block;
        overflow: visible;
    }

    ul {
        list-style: none;
        margin: 0;
        padding: 0;
    }

    /* title bar */
    .titlebar {
        position: relative;
        flex: none;
        height: 40px;
        background: linear-gradient(#2e3842, #4b566a);
    }

    .caption {
        padding-top: 2px;
        height: 21px;
        text-align: center;
        color: #fff;
    }

    .menu {
        display: flex;
        height: 19px;
    }

    .app .menu button {
        width: 58px;
        padding-top: 2px;
        color: #fff;
    }

    .app .menu .active {
        background: #f2f2f2;
        color: #000;
    }

    .brand {
        position: absolute;
        right: 112px;
        top: 13px;
        display: flex;
        align-items: flex-start;
        color: #fff;
    }

    .brand strong {
        margin-left: 4px;
        padding-top: 2px;
        font: bold 22px/24px "Open Sans", sans-serif;
    }

    .brand em {
        padding-top: 13px;
        font: italic 13px/16px "Liberation Sans", sans-serif;
    }

    .winctl {
        position: absolute;
        right: 14px;
        top: 5px;
        display: flex;
        gap: 26px;
    }

    /* ribbon */
    .ribbon {
        display: flex;
        flex: none;
        height: 70px;
        padding-left: 4px;
        border-bottom: 2px solid #bcc6d4;
    }

    .group {
        display: flex;
    }

    .group + .group {
        border-left: 1px solid #c4ccd8;
    }

    .group:nth-child(2) {
        margin-left: -3px;
        padding-right: 2px;
        padding-left: 2px;
    }

    .group:nth-child(3) {
        padding-left: 3px;
    }

    .group:nth-child(4) {
        margin-left: -1px;
    }

    .app .big {
        display: flex;
        flex-direction: column;
        align-items: center;
        gap: 6px;
        width: 52px;
        padding-top: 9px;
        font-size: 11px;
    }

    .app .narrow {
        width: 49px;
    }

    .toolbar {
        display: flex;
        flex: none;
        height: 35px;
        border-bottom: 1px solid #bcc6d4;
    }

    .strip {
        display: flex;
        align-items: center;
        padding-left: 2px;
        border-left: 3px double #aab2be;
    }

    .first {
        width: 327px;
        margin-left: 2px;
        padding-left: 0;
        gap: 2px;
    }

    .first .combo + .icon {
        margin-left: 2px;
    }

    .elements {
        width: 465px;
    }

    .sizes {
        width: 500px;
    }

    .run {
        flex: 1;
    }

    .run .combo {
        margin: 0 2px 0 3px;
    }

    .app .tool {
        display: flex;
        align-items: center;
        justify-content: center;
        width: 35px;
        height: 32px;
        flex: none;
    }

    .app .pressed {
        width: 31px;
        margin: 0 2px;
        border: 1px solid #2e5e90;
        background: linear-gradient(#dceafc, #8fb4ee);
    }

    .combo {
        display: flex;
        width: 120px;
        height: 23px;
    }

    .wide {
        width: 149px;
    }

    .app .combo select {
        flex: 1;
        min-width: 0;
        appearance: none;
        padding: 0 3px;
        border: 1px solid #444;
        border-radius: 0;
        background: #fff;
    }

    .app .navy select {
        border-color: #1c2f78;
    }

    .combo i {
        display: flex;
        align-items: center;
        justify-content: center;
        width: 22px;
        border: 1px solid #6c8cb0;
        border-left: 0;
        background: #fff;
    }

    .combo i::before {
        content: "";
        border: 5px solid transparent;
        border-top: 6px solid #16307e;
        border-bottom: 0;
    }

    main {
        display: flex;
        flex: 1;
        min-height: 0;
    }

    /* program list */
    .program {
        display: flex;
        flex-direction: column;
        width: 398px;
        border-bottom: 1px solid #555;
        background: #fefefe;
    }

    .tabs {
        display: flex;
        flex: none;
        height: 25px;
        padding-left: 4px;
        background: #76808b;
    }

    .app .tabs button {
        padding: 0 10px;
        color: #fff;
    }

    .app .tabs .active {
        width: 54px;
        background: #f2f2f2;
        color: #000;
    }

    .app .tabs button:nth-child(2) {
        width: 54px;
    }

    .app .tabs button:nth-child(4) {
        padding: 0 5px;
    }

    .app .tabs .fold {
        margin-left: auto;
        padding: 0 9px;
    }

    .tabs .fold svg {
        display: block;
    }

    .listing {
        display: flex;
        flex: 1;
        min-height: 0;
    }

    .listing ul {
        flex: 1;
        min-width: 0;
    }

    .listing li {
        display: flex;
        align-items: center;
        height: 31px;
        padding-right: 5px;
    }

    .no {
        width: 78px;
        padding-left: 32px;
    }

    .mark {
        width: 7px;
        height: 24px;
        margin-right: 1px;
    }

    .ok {
        background: #55ff22;
    }

    .bad {
        background: #f00;
    }

    .app .listing li button {
        flex: 1;
        height: 30px;
        margin-left: 2px;
        padding-left: 1px;
        text-align: left;
        white-space: pre;
    }

    .app .listing li .selected {
        background: #00bfff;
    }

    .scroll {
        display: flex;
        flex-direction: column;
        align-items: center;
        width: 16px;
        padding: 9px 0;
        background: #f0f0f0;
    }

    .thumb {
        width: 14px;
        height: 344px;
        margin: auto 0 8px;
        border: 1px solid #979797;
        border-radius: 2px;
        background: linear-gradient(90deg, #f6f6f6, #dcdcdc 50%, #c4c4c8);
    }

    /* 3d view */
    .work {
        display: flex;
        flex: 1;
        flex-direction: column;
        min-width: 0;
        border-right: 2px solid #48505c;
    }

    .scene {
        display: flex;
        flex: 1;
        min-height: 0;
    }

    .viewport {
        position: relative;
        flex: 1;
        background: linear-gradient(#a8a8da, #e8e8ff);
    }

    .part {
        position: absolute;
        left: 911px;
        top: 175px;
    }

    .cube {
        position: absolute;
        left: 1px;
        bottom: -1px;
    }

    .tags text {
        font: 46px "Liberation Serif", "Noto Sans CJK SC", serif;
        fill: #fff;
    }

    .tags .z {
        font: italic bold 32px "Liberation Serif", serif;
        fill: #2040ff;
    }

    .face text {
        font: 52px "Open Sans", sans-serif;
    }

    .face .small {
        font-size: 40px;
    }

    .axis text {
        font: bold 46px "Liberation Serif", serif;
    }

    .dot {
        position: absolute;
        width: 5px;
        height: 5px;
        border-radius: 50%;
        background: #e00000;
    }

    .one {
        left: 1059px;
        top: 20px;
    }

    .two {
        left: 1387px;
        top: 5px;
    }

    .side {
        width: 49px;
        background: #e0e0e6;
    }

    .app .up {
        display: block;
        width: 100%;
        height: 25px;
        padding: 5px 4px 0;
        background: #8b8b98;
        text-align: left;
    }

    .stack {
        margin-top: -4px;
    }

    .app .stack button {
        display: flex;
        align-items: center;
        justify-content: center;
        width: 49px;
        height: 50px;
    }

    .app .stack .lit {
        height: 48px;
        border: 1px solid #2e6ea0;
        background: #a8d8f8;
        box-shadow: inset 0 0 4px 4px #ffa468;
    }

    .drawer {
        display: flex;
        flex: none;
        align-items: center;
        justify-content: center;
        height: 20px;
        padding-left: 16px;
        background: #4e596b;
    }

    /* status bar */
    .status {
        display: flex;
        flex: none;
        gap: 1px;
        height: 30px;
        padding: 2px 4px 2px 7px;
        background: #f0ecec;
    }

    .coords {
        flex: 1;
        padding-top: 2px;
    }

    .cell {
        display: flex;
        align-items: center;
        gap: 5px;
        padding: 2px 6px 0;
        border: 1px solid #b4b4ba;
        background: linear-gradient(#f8f8f8, #e8e8ec);
        white-space: nowrap;
    }

    .user {
        width: 145px;
        padding-left: 4px;
    }

    .slim {
        justify-content: center;
        width: 39px;
    }

    .mid {
        width: 164px;
    }

    .ang {
        width: 143px;
        padding-left: 10px;
    }

    .b {
        margin-left: 10px;
    }

    .tip {
        width: 254px;
        padding-left: 10px;
    }

    .mm {
        width: 74px;
        padding-left: 10px;
    }

    .taskbar {
        flex: none;
        height: 3px;
        background: #22343e;
    }

    .ime {
        position: absolute;
        right: 171px;
        bottom: 2px;
        width: 206px;
        height: 23px;
        background: #fff;
    }

    .ime b {
        position: absolute;
        left: 33px;
        top: 3px;
        font-size: 15px;
        color: #1a6fd0;
    }

    .sogou {
        position: absolute;
        left: -2px;
        bottom: 0;
        width: 26px;
        height: 26px;
        border-radius: 4px;
        background: #f4511e;
        color: #fff;
        font: bold 24px/26px "Liberation Sans", sans-serif;
        text-align: center;
        transform: rotate(-8deg);
    }

    .watermark {
        position: absolute;
        right: 5px;
        bottom: 8px;
        font-size: 38px;
        line-height: 50px;
        font-family: "Noto Sans CJK SC", sans-serif;
        font-weight: 300;
        color: rgba(215, 215, 220, .85);
        text-shadow: 1px 1px 1px rgba(60, 60, 70, .7);
    }

    /* tolerance dialog */
    .dialog {
        position: absolute;
        left: 397px;
        top: 141px;
        width: 899px;
        border: 1px solid #6a6a6a;
        background: #f2f2f2;
    }

    .dlg-title {
        display: flex;
        align-items: center;
        justify-content: space-between;
        height: 28px;
        padding: 0 21px 0 5px;
        background: linear-gradient(#2e3842, #565d74);
    }

    .dlg-title span {
        color: #fff;
    }

    .dlg-name {
        display: flex;
        align-items: center;
        padding: 7px 13px 8px;
    }

    .dlg-name label {
        width: 58px;
    }

    .app .dialog input {
        height: 25px;
        padding: 0 3px;
        border: 1px solid #444;
        background: #fff;
    }

    .dlg-name input {
        flex: 1;
    }

    .app .btn {
        display: flex;
        align-items: center;
        justify-content: center;
        height: 25px;
        border: 1px solid #bfc3d2;
        background: linear-gradient(#f6f6f8, #e8e8ee);
    }

    .dlg-name .btn {
        width: 199px;
        margin-left: 12px;
    }

    .dlg-body {
        display: flex;
        height: 580px;
        margin: 0 13px;
        border: 1px solid #cfcfcf;
    }

    .pick {
        display: flex;
        flex-direction: column;
        width: 250px;
        padding: 3px 4px 2px;
        border-right: 1px solid #cfcfcf;
        background: #fff;
    }

    .row {
        display: flex;
        align-items: center;
        justify-content: space-between;
        margin-bottom: 5px;
    }

    .sort {
        padding-left: 4px;
    }

    .drop {
        position: relative;
        width: 162px;
    }

    .app .drop select {
        width: 100%;
        height: 25px;
        padding: 0 4px;
        appearance: none;
        border: 1px solid #444;
        border-radius: 0;
        background: #fff;
    }

    .drop svg {
        position: absolute;
        right: 6px;
        top: 9px;
    }

    .drop.grey {
        width: 127px;
    }

    .app .grey select {
        padding: 0 1px;
        border-color: #b0b0b0;
        color: #a0a0a0;
    }

    .search {
        gap: 4px;
        margin-bottom: 3px;
    }

    .search input {
        flex: 1;
    }

    .search .btn {
        width: 25px;
    }

    .box {
        padding-top: 1px;
        border: 1px solid #444;
        background: #fff;
    }

    .box li {
        display: flex;
        align-items: center;
        gap: 4px;
        height: 20px;
        padding-left: 3px;
    }

    .tall {
        height: 253px;
    }

    .short {
        flex: 1;
    }

    .chosen {
        height: 31px;
        margin: 3px -4px 0;
        padding: 0 12px 0 8px;
        border-top: 1px solid #cfcfcf;
    }

    .faded {
        margin-left: 112px;
        opacity: .4;
    }

    .define {
        display: flex;
        flex: 1;
        flex-direction: column;
        min-width: 0;
        background: #fff;
    }

    .dlg-tabs {
        display: flex;
        height: 29px;
        border-bottom: 1px solid #cfcfcf;
        background: #f4f4f4;
    }

    .app .dlg-tabs button {
        width: 65px;
        border: 1px solid #b8c4dc;
        border-width: 0 1px 0 2px;
        background: #e0e0e8;
    }

    .app .dlg-tabs .on {
        width: 62px;
        border: 0;
        background: #fff;
    }

    .standard {
        display: flex;
        align-items: center;
        gap: 4px;
        height: 39px;
        padding-left: 6px;
        background: #f4f4f4;
    }

    .standard label {
        width: 64px;
    }

    .sheet {
        flex: 1;
        padding: 17px 44px 0 46px;
        background: #fafafa;
    }

    .frame {
        height: 129px;
        padding: 8px 7px;
        border: 3px solid #a9a9a9;
    }

    .fcf {
        display: flex;
        height: 72px;
        font: 20px/34px "Liberation Sans", sans-serif;
    }

    .sym {
        display: flex;
        align-items: center;
        justify-content: center;
        width: 37px;
        border: 1px solid #000;
        background: #c0c0c0;
    }

    .v1 {
        width: 52px;
        height: 35px;
        padding-left: 9px;
        border: 1px solid #000;
        border-width: 1px 1px 0 0;
    }

    .v2 {
        display: flex;
        width: 160px;
        height: 37px;
        padding: 0 5px 0 10px;
        gap: 9px;
        border: 1px solid #000;
        border-left: 0;
    }

    .area {
        margin-left: auto;
    }

    .dash {
        width: 6px;
        height: 3px;
        margin: 16px 0 0 15px;
        background: #dcdcdc;
    }

    .fit {
        display: flex;
        align-items: center;
        justify-content: space-between;
        height: 28px;
        padding: 0 1px 0 4px;
        border-top: 1px solid #cfcfcf;
    }

    .fit .btn {
        width: 30px;
    }

    table {
        width: 100%;
        border-collapse: collapse;
        table-layout: fixed;
        border-top: 1px solid #b8bcc0;
        border-bottom: 1px solid #b8bcc0;
    }

    .c1 {
        width: 100px;
    }

    .c2 {
        width: 200px;
    }

    th, td {
        height: 20px;
        padding: 0;
        border-bottom: 1px solid #b8bcc0;
        font-weight: normal;
        text-align: center;
    }

    th {
        border-right: 1px solid #a8b0b8;
        background: #dee2e6;
    }

    th:last-child {
        border-right: 0;
    }

    .sect td {
        background: #e6e8ec;
        text-align: left;
    }

    .fold-box {
        display: inline-block;
        width: 9px;
        height: 9px;
        margin: 0 2px 0 1px;
        border: 1px solid #2a5a90;
        background: linear-gradient(#2a5a90, #2a5a90) center / 5px 1px no-repeat #fff;
    }

    .dlg-foot {
        display: flex;
        justify-content: flex-end;
        gap: 10px;
        padding: 10px 13px 8px;
    }

    .app .dlg-foot .btn {
        gap: 5px;
        width: 70px;
        height: 30px;
    }
</style>
